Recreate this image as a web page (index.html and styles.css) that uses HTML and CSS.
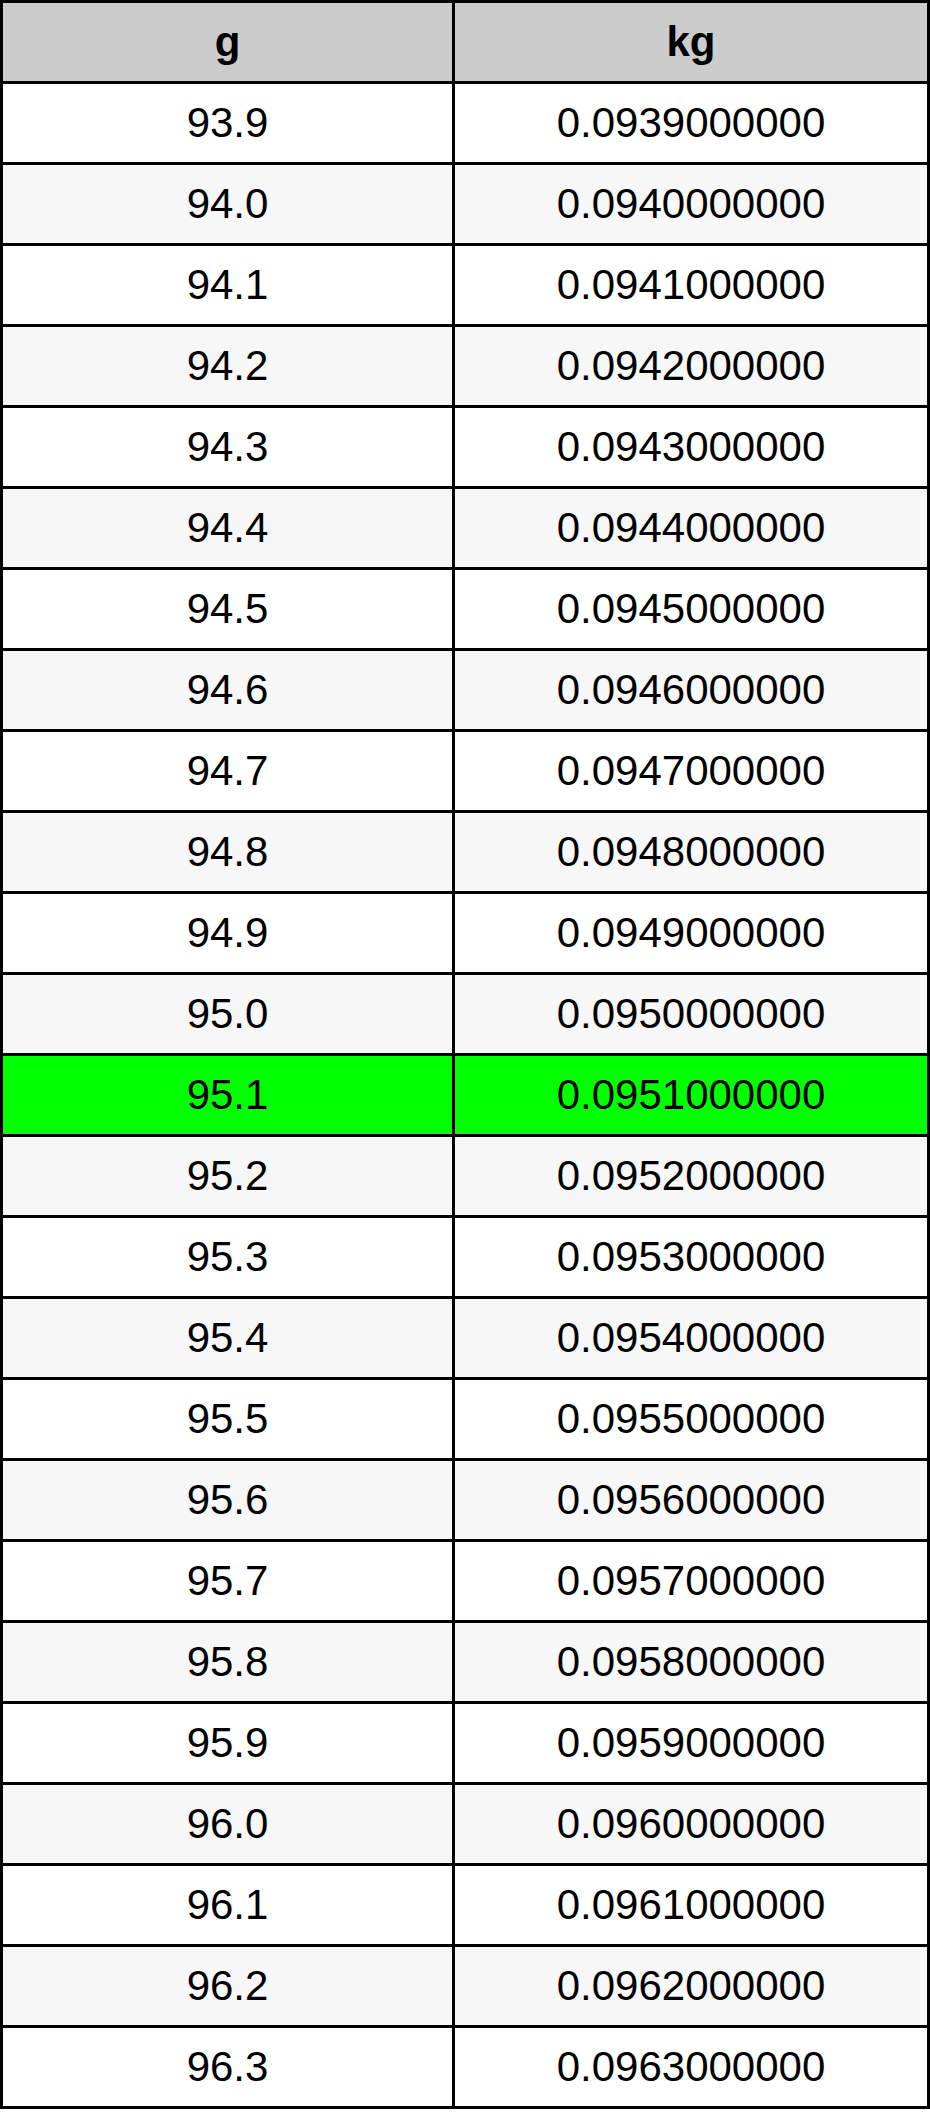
FILE: index.html
```html
<!DOCTYPE html>
<html>
<head>
<meta charset="utf-8">
<link rel="stylesheet" href="styles.css">
</head>
<body>
<table class="conv">
<thead>
<tr><th class="c1">g</th><th class="c2">kg</th></tr>
</thead>
<tbody>
<tr><td>93.9</td><td>0.0939000000</td></tr>
<tr><td>94.0</td><td>0.0940000000</td></tr>
<tr><td>94.1</td><td>0.0941000000</td></tr>
<tr><td>94.2</td><td>0.0942000000</td></tr>
<tr><td>94.3</td><td>0.0943000000</td></tr>
<tr><td>94.4</td><td>0.0944000000</td></tr>
<tr><td>94.5</td><td>0.0945000000</td></tr>
<tr><td>94.6</td><td>0.0946000000</td></tr>
<tr><td>94.7</td><td>0.0947000000</td></tr>
<tr><td>94.8</td><td>0.0948000000</td></tr>
<tr><td>94.9</td><td>0.0949000000</td></tr>
<tr><td>95.0</td><td>0.0950000000</td></tr>
<tr class="hl"><td>95.1</td><td>0.0951000000</td></tr>
<tr><td>95.2</td><td>0.0952000000</td></tr>
<tr><td>95.3</td><td>0.0953000000</td></tr>
<tr><td>95.4</td><td>0.0954000000</td></tr>
<tr><td>95.5</td><td>0.0955000000</td></tr>
<tr><td>95.6</td><td>0.0956000000</td></tr>
<tr><td>95.7</td><td>0.0957000000</td></tr>
<tr><td>95.8</td><td>0.0958000000</td></tr>
<tr><td>95.9</td><td>0.0959000000</td></tr>
<tr><td>96.0</td><td>0.0960000000</td></tr>
<tr><td>96.1</td><td>0.0961000000</td></tr>
<tr><td>96.2</td><td>0.0962000000</td></tr>
<tr><td>96.3</td><td>0.0963000000</td></tr>
</tbody>
</table>
</body>
</html>
```
FILE: styles.css
```css
html, body {
  margin: 0;
  padding: 0;
  background: #ffffff;
}
.conv {
  width: 930px;
  border-collapse: collapse;
  table-layout: fixed;
  font-family: "Liberation Sans", Arial, sans-serif;
  font-size: 42px;
  color: #000000;
}
.conv th, .conv td {
  border: 3px solid #000000;
  height: 78px;
  padding: 0;
  text-align: center;
  vertical-align: middle;
}
.conv th {
  background: #cccccc;
  font-weight: bold;
}
.conv .c1 { width: 449px; }
.conv tbody tr:nth-child(odd) td { background: #ffffff; }
.conv tbody tr:nth-child(even) td { background: #f7f7f7; }
.conv tbody tr.hl td { background: #00ff00; }
```
